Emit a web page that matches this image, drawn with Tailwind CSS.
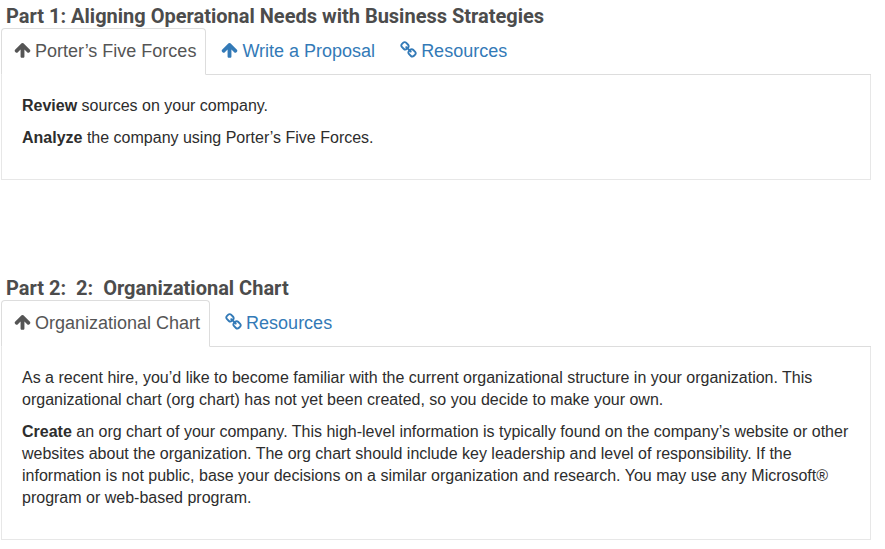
<!DOCTYPE html>
<html lang="en">
<head>
<meta charset="utf-8">
<meta name="viewport" content="width=device-width, initial-scale=1">
<title>Assignment parts</title>
<script src="https://cdn.jsdelivr.net/npm/@tailwindcss/browser@4"></script>
</head>
<body class="bg-white font-['Liberation_Sans',Arial,sans-serif] text-base leading-[22px] text-[#2d2d2d]">
<svg class="hidden" aria-hidden="true">
  <symbol id="arrow-up" viewBox="64 0 1664 1792"><path d="M1675 971q0 51-37 90l-75 75q-38 38-91 38-54 0-90-38l-294-293v704q0 52-37.5 84.5t-90.5 32.5h-128q-53 0-90.5-32.5t-37.5-84.5v-704l-294 293q-36 38-90 38t-90-38l-75-75q-38-38-38-90 0-53 38-91l651-651q35-37 90-37 54 0 91 37l651 651q37 39 37 91z"/></symbol>
  <symbol id="chain" viewBox="64 0 1664 1792"><path d="M1520 1216q0-40-28-68l-208-208q-28-28-68-28-42 0-72 32 3 3 19 18.5t21.5 21.5 15 19 13 25.5 3.5 27.5q0 40-28 68t-68 28q-15 0-27.5-3.5t-25.5-13-19-15-21.5-21.5-18.5-19q-33 31-33 73 0 40 28 68l206 207q27 27 68 27 40 0 68-26l147-146q28-28 28-67zm-703-705q0-40-28-68l-206-207q-28-28-68-28-39 0-68 27l-147 146q-28 28-28 67 0 40 28 68l208 208q27 27 68 27 42 0 72-31-3-3-19-18.5t-21.5-21.5-15-19-13-25.5-3.5-27.5q0-40 28-68t68-28q15 0 27.5 3.5t25.5 13 19 15 21.5 21.5 18.5 19q33-31 33-73zm895 705q0 120-85 203l-147 146q-83 83-203 83-121 0-204-85l-206-207q-83-83-83-203 0-123 88-209l-88-88q-86 88-208 88-120 0-204-84l-208-208q-84-84-84-204t85-203l147-146q83-83 203-83 121 0 204 85l206 207q83 83 83 203 0 123-88 209l88 88q86-88 208-88 120 0 204 84l208 208q84 84 84 204z"/></symbol>
</svg>
<main class="flex flex-col gap-24 pt-1 pr-3.5 pb-2 pl-px">
  <section>
    <h2 class="pl-[5px] font-[Roboto,sans-serif] text-xl leading-6 font-bold text-[#4c4c4c]">Part 1: Aligning Operational Needs with Business Strategies</h2>
    <nav class="flex gap-0.5 border-b border-[#ddd] text-lg leading-[25px]" aria-label="Part 1">
      <a href="#forces" aria-current="true" class="-mb-px flex items-center gap-1 rounded-t border border-[#ddd] border-b-white bg-white py-2.5 pr-[9px] pl-3 text-[#555]"><svg class="mb-[3px] h-[18px] w-[17px] fill-current" aria-hidden="true"><use href="#arrow-up"/></svg>Porter’s Five Forces</a>
      <a href="#proposal" class="-mb-px flex items-center gap-1 border border-transparent py-2.5 pr-[9px] pl-3 text-[#337ab7]"><svg class="mb-[3px] h-[18px] w-[17px] fill-current" aria-hidden="true"><use href="#arrow-up"/></svg>Write a Proposal</a>
      <a href="#resources-1" class="-mb-px flex items-center gap-1 border border-transparent py-2.5 pr-[9px] pl-3 text-[#337ab7]"><svg class="mb-[3px] h-[18px] w-[17px] fill-current" aria-hidden="true"><use href="#chain"/></svg>Resources</a>
    </nav>
    <div id="forces" class="flex flex-col gap-2.5 border border-t-0 border-[#e7e7e7] px-5 pt-5 pb-[30px]">
      <p><strong>Review</strong> sources on your company.</p>
      <p><strong>Analyze</strong> the company using Porter’s Five Forces.</p>
    </div>
  </section>
  <section>
    <h2 class="pl-[5px] font-[Roboto,sans-serif] text-xl leading-6 font-bold text-[#4c4c4c]">Part 2:&nbsp; 2:&nbsp; Organizational Chart</h2>
    <nav class="flex gap-0.5 border-b border-[#ddd] text-lg leading-[25px]" aria-label="Part 2">
      <a href="#chart" aria-current="true" class="-mb-px flex items-center gap-1 rounded-t border border-[#ddd] border-b-white bg-white py-2.5 pr-[9px] pl-3 text-[#555]"><svg class="mb-[3px] h-[18px] w-[17px] fill-current" aria-hidden="true"><use href="#arrow-up"/></svg>Organizational Chart</a>
      <a href="#resources-2" class="-mb-px flex items-center gap-1 border border-transparent py-2.5 pr-[9px] pl-3 text-[#337ab7]"><svg class="mb-[3px] h-[18px] w-[17px] fill-current" aria-hidden="true"><use href="#chain"/></svg>Resources</a>
    </nav>
    <div id="chart" class="flex flex-col gap-2.5 border border-t-0 border-[#e7e7e7] px-5 pt-5 pb-[30px]">
      <p>As a recent hire, you’d like to become familiar with the current organizational structure in your organization. This organizational chart (org chart) has not yet been created, so you decide to make your own.</p>
      <p><strong>Create</strong> an org chart of your company. This high-level information is typically found on the company’s website or other websites about the organization. The org chart should include key leadership and level of responsibility. If the information is not public, base your decisions on a similar organization and research. You may use any Microsoft® program or web-based program.</p>
    </div>
  </section>
</main>
</body>
</html>
